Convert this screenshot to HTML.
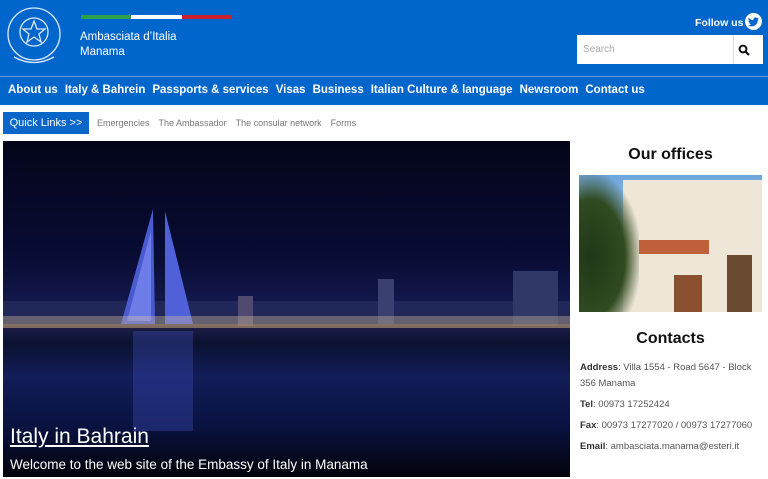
<!DOCTYPE html>
<html><head><meta charset="utf-8"><style>
*{margin:0;padding:0;box-sizing:border-box}
body{width:768px;height:479px;overflow:hidden;background:#fff;font-family:"Liberation Sans",sans-serif;position:relative}
.hdr{position:absolute;left:0;top:0;width:768px;height:105px;background:#0066cc}
.sep{position:absolute;left:0;top:76px;width:768px;height:1px;background:#5a9ae0}
.nav{position:absolute;top:84px;left:8px;color:#fff;font-weight:bold;font-size:11.5px;white-space:nowrap}
.nav span{margin-right:7px}
.ql{position:absolute;left:3px;top:112px;width:86px;height:22px;background:#0a66c8;color:#fff;font-size:11px;line-height:22px;text-align:center}
.qs{position:absolute;left:97px;top:118px;font-size:9px;color:#777;white-space:nowrap}
.qs span{margin-right:9px}
.hero{position:absolute;left:3px;top:141px;width:567px;height:336px;background:linear-gradient(#04051a 0%,#090c34 35%,#141a50 50%,#1e1d48 55%,#0b1230 60%,#121c58 70%,#0a1240 85%,#02030a 100%);overflow:hidden}
h2{position:absolute;left:579px;width:183px;text-align:center;font-size:16px;font-weight:bold;color:#111}
.ct{position:absolute;left:580px;top:360px;width:182px;font-size:9.5px;color:#555;line-height:16px}
.ct p{margin-bottom:5px}.ct b{color:#333}
</style></head><body>
<div class="hdr"></div>
<svg style="position:absolute;left:4px;top:2px" width="60" height="68" viewBox="0 0 60 68"><g fill="none" stroke="#dfe9f8" stroke-width="1.3"><circle cx="30" cy="32" r="26"/><circle cx="30" cy="30" r="14"/><polygon points="30,19 33,27 41,27 35,32 37,40 30,35 23,40 25,32 19,27 27,27"/><path d="M10 55 Q30 66 50 55"/></g></svg>
<div style="position:absolute;left:81px;top:15px;width:50px;height:4px;background:#2aa14a"></div>
<div style="position:absolute;left:131px;top:15px;width:51px;height:4px;background:#fff"></div>
<div style="position:absolute;left:182px;top:15px;width:50px;height:4px;background:#c8202e"></div>
<div style="position:absolute;left:80px;top:30px;color:#fff;font-size:11.5px;line-height:15px">Ambasciata d’Italia<br>Manama</div>
<div style="position:absolute;left:695px;top:17px;color:#fff;font-size:10.5px;font-weight:bold">Follow us</div>
<div style="position:absolute;left:745px;top:13px;width:17px;height:17px;border-radius:50%;background:#fff"></div>
<svg style="position:absolute;left:748px;top:17px" width="11" height="10" viewBox="0 0 24 20"><path fill="#0066cc" d="M24 2.4a10 10 0 0 1-2.8.8 5 5 0 0 0 2.1-2.7 10 10 0 0 1-3.1 1.2A4.9 4.9 0 0 0 11.8 6 14 14 0 0 1 1.7.9a4.9 4.9 0 0 0 1.5 6.6 4.9 4.9 0 0 1-2.2-.6 4.9 4.9 0 0 0 3.9 4.8 4.9 4.9 0 0 1-2.2.1 4.9 4.9 0 0 0 4.6 3.4A9.9 9.9 0 0 1 0 17.3 14 14 0 0 0 7.5 19.5c9 0 14-7.5 14-14v-.6A10 10 0 0 0 24 2.4z"/></svg>
<div style="position:absolute;left:577px;top:35px;width:186px;height:29px;background:#fff"></div>
<div style="position:absolute;left:733px;top:35px;width:1px;height:29px;background:#ddd"></div>
<div style="position:absolute;left:583px;top:44px;font-size:10px;color:#aaa">Search</div>
<svg style="position:absolute;left:738px;top:44px" width="12" height="12" viewBox="0 0 12 12"><circle cx="5" cy="5" r="3.4" fill="none" stroke="#111" stroke-width="2"/><path d="M7.5 7.5 11 11" stroke="#111" stroke-width="2.2"/></svg>
<div class="sep"></div>
<div class="nav"><span>About us</span><span>Italy &amp; Bahrein</span><span>Passports &amp; services</span><span>Visas</span><span>Business</span><span>Italian Culture &amp; language</span><span>Newsroom</span><span>Contact us</span></div>
<div class="ql">Quick Links &gt;&gt;</div>
<div class="qs"><span>Emergencies</span><span>The Ambassador</span><span>The consular network</span><span>Forms</span></div>
<div class="hero">
<svg width="567" height="336" style="position:absolute;left:0;top:0">
<rect x="0" y="160" width="567" height="25" fill="#2a3060" opacity=".6"/>
<polygon points="118,183 150,68 152,183" fill="#4a5acf"/><polygon points="162,183 162,70 190,183" fill="#5060d8"/>
<polygon points="124,180 148,90 148,180" fill="#8fa0ff" opacity=".5"/>
<rect x="375" y="138" width="16" height="45" fill="#3a4070"/><rect x="510" y="130" width="45" height="55" fill="#303868"/><rect x="235" y="155" width="15" height="30" fill="#504a70"/>
<rect x="0" y="175" width="567" height="8" fill="#e0c8a0" opacity=".35"/>
<rect x="0" y="183" width="567" height="4" fill="#c0a070" opacity=".6"/>
<rect x="130" y="190" width="60" height="100" fill="#4050c0" opacity=".35"/>
</svg>
<div style="position:absolute;left:7px;top:284px;color:#fff;font-size:21px;text-decoration:underline">Italy in Bahrain</div>
<div style="position:absolute;left:7px;top:316px;color:#fff;font-size:13.5px">Welcome to the web site of the Embassy of Italy in Manama</div>
</div>
<h2 style="top:146px">Our offices</h2>
<div style="position:absolute;left:579px;top:175px;width:183px;height:137px;background:linear-gradient(#6ea6de,#b9d6f0 60%,#d8d2c0);overflow:hidden">
<div style="position:absolute;left:44px;top:5px;width:139px;height:132px;background:#eee6d6"></div>
<div style="position:absolute;left:60px;top:65px;width:70px;height:14px;background:#c0603a"></div>
<div style="position:absolute;left:95px;top:100px;width:28px;height:37px;background:#8a5030"></div>
<div style="position:absolute;left:148px;top:80px;width:25px;height:57px;background:#6a4a30"></div>
<div style="position:absolute;left:0;top:0;width:60px;height:137px;background:radial-gradient(ellipse at 20% 60%,#203818,#304a20 50%,transparent 75%)"></div>
</div>
<h2 style="top:330px">Contacts</h2>
<div class="ct"><p><b>Address</b>: Villa 1554 - Road 5647 - Block 356 Manama</p><p><b>Tel</b>: 00973 17252424</p><p><b>Fax</b>: 00973 17277020 / 00973 17277060</p><p><b>Email</b>: ambasciata.manama@esteri.it</p></div>
</body></html>
